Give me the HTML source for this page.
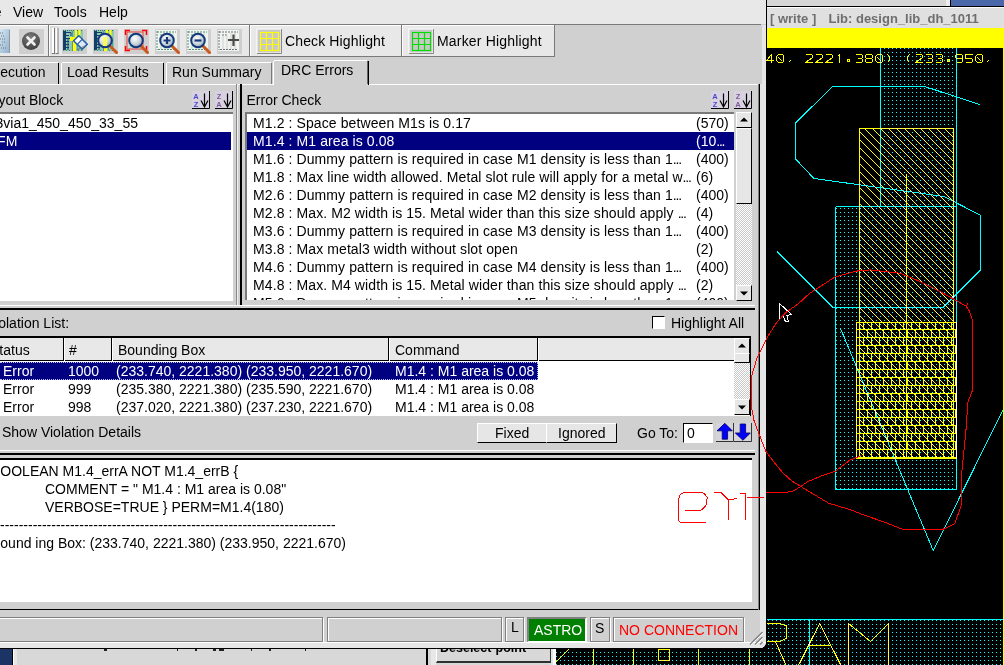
<!DOCTYPE html>
<html><head><meta charset="utf-8">
<style>
*{box-sizing:border-box}
html,body{margin:0;padding:0}
body{width:1004px;height:665px;position:relative;overflow:hidden;background:#000;font-family:"Liberation Sans",sans-serif;font-size:14px;color:#000}
.a{position:absolute}
.t{position:absolute;white-space:pre;line-height:18px}
.btn{position:absolute;background:#e6e6e6;border:1px solid;border-color:#fff #000 #000 #fff}
.sunk{position:absolute;border:1px solid #808080;box-shadow:inset 1px 1px #fff,1px 1px #fff}
</style></head><body>

<svg class="a" style="left:0;top:0;z-index:0" width="1004" height="665" viewBox="0 0 1004 665" shape-rendering="crispEdges">
<defs>
<pattern id="dots" patternUnits="userSpaceOnUse" x="0" y="0" width="4" height="4"><rect x="0" y="0" width="1" height="1" fill="#00ffff"/></pattern>
<pattern id="hatch" patternUnits="userSpaceOnUse" x="0" y="0" width="8" height="8"><path d="M-3,-3 L11,11 M-11,-3 L3,11 M5,-3 L19,11" stroke="#ffff00" stroke-width="1" fill="none" /></pattern>
<pattern id="brick" patternUnits="userSpaceOnUse" x="0" y="1" width="8" height="16"><path d="M0,0.5 H8 M0,8.5 H8 M7.5,0 V8 M3.5,8 V16" stroke="#ffff00" stroke-width="1" fill="none"/></pattern>
</defs>
<rect x="0" y="0" width="1004" height="665" fill="#000"/>
<g id="cyan" fill="none" stroke="#00ffff" stroke-width="1">
  <rect x="880" y="48" width="76" height="158" fill="url(#dots)" stroke="none"/>
  <rect x="835" y="206" width="121" height="283" fill="url(#dots)" stroke="none"/>
  <rect x="555" y="619" width="449" height="46" fill="url(#dots)" stroke="none"/>
  <path d="M880.5,48 V206.5 M956.5,48 V489.5 M835.5,206.5 H956.5 M835.5,206.5 V489.5 H956.5"/>
  <path d="M767,619.5 H1004 M809.5,619.5 V665"/>
  <polyline  points="924.8,86.5 979.7,104.5"/>
  <polyline  points="924.8,86.5 832.5,86.5 795.5,123 795.5,159 814,178.5 944,196.5 980,215 980,270.6 943,307.5 833,307.5 777,251.5"/>
  <polyline  points="840.3,328 933.2,550.6 1003,410"/>
</g>
<g id="yellow" fill="none" stroke="#ffff00" stroke-width="1" style="mix-blend-mode:lighten">
  <rect x="859" y="128" width="95" height="331" fill="url(#hatch)" stroke="none"/>
  <rect x="859.5" y="128.5" width="94" height="330"/>
  <path d="M906.5,174 V459"/>
  <rect x="856" y="322" width="101" height="137" fill="url(#brick)" stroke="none"/>
  <rect x="856.5" y="322.5" width="100" height="136"/>
  <path d="M953.5,322 V459"/>
  <path d="M1003.5,48 V665"/>
  <g >
  <polyline points="767,623.5 780,623.5 786.7,626 786.7,638 780,641.4 767,641.4"/>
  <polyline points="775.3,641.4 786,665"/>
  <polyline points="798.7,665 819.7,623.4 840.8,665"/>
  <polyline points="809.4,645.5 830.8,645.5"/>
  <polyline points="848.5,665 848.5,623.4 870.4,641.4 888.6,623.4 888.6,665"/>
  <polyline points="556,662 569,649"/>
  </g>
  <path d="M593.5,648 V665 M633.5,648 V665 M698.5,648 V665 M749.5,648 V665"/>
  <rect x="658.5" y="649.5" width="11" height="10.5"/>
</g>
<path d="M771.5,62.5 V54.5 L766.5,60.5 H773.5 M778.5,54.5 H782.5 L783.5,55.5 V61.5 L782.5,62.5 H778.5 L776.5,60.5 V56.5 ZM778.5,57.5 L782.5,61.5 M790.5,59.5 V60.5 L788.5,62.5 M805.5,55.5 L806.5,54.5 H811.5 L812.5,55.5 V57.5 L805.5,62.5 H812.5 M815.5,55.5 L816.5,54.5 H821.5 L822.5,55.5 V57.5 L815.5,62.5 H822.5 M825.5,55.5 L826.5,54.5 H831.5 L832.5,55.5 V57.5 L825.5,62.5 H832.5 M837.5,56.5 L839.5,54.5 V62.5 M847.5,59.5 H849.5 V61.5 H847.5 ZM855.5,54.5 H861.5 L862.5,55.5 V57.5 L861.5,58.5 H857.5 M861.5,58.5 L862.5,59.5 V61.5 L861.5,62.5 H855.5 M866.5,54.5 H871.5 L872.5,55.5 V57.5 L871.5,58.5 H866.5 L865.5,57.5 V55.5 ZM866.5,58.5 L865.5,59.5 V61.5 L866.5,62.5 H871.5 L872.5,61.5 V59.5 L871.5,58.5 M877.5,54.5 H881.5 L882.5,55.5 V61.5 L881.5,62.5 H877.5 L875.5,60.5 V56.5 ZM877.5,57.5 L881.5,61.5 M887.5,54.5 L889.5,56.5 V60.5 L887.5,62.5 M909.5,54.5 L907.5,56.5 V60.5 L909.5,62.5 M915.5,55.5 L916.5,54.5 H921.5 L922.5,55.5 V57.5 L915.5,62.5 H922.5 M925.5,54.5 H931.5 L932.5,55.5 V57.5 L931.5,58.5 H927.5 M931.5,58.5 L932.5,59.5 V61.5 L931.5,62.5 H925.5 M935.5,54.5 H941.5 L942.5,55.5 V57.5 L941.5,58.5 H937.5 M941.5,58.5 L942.5,59.5 V61.5 L941.5,62.5 H935.5 M947.5,59.5 H949.5 V61.5 H947.5 ZM961.5,58.5 H956.5 L955.5,57.5 V55.5 L956.5,54.5 H961.5 L962.5,55.5 V61.5 L961.5,62.5 H956.5 M972.5,54.5 H965.5 V58.5 H971.5 L972.5,59.5 V61.5 L971.5,62.5 H965.5 M977.5,54.5 H981.5 L982.5,55.5 V61.5 L981.5,62.5 H977.5 L975.5,60.5 V56.5 ZM977.5,57.5 L981.5,61.5 M988.5,59.5 V60.5 L986.5,62.5 " stroke="#ffff00" stroke-width="1" fill="none" shape-rendering="crispEdges" style="mix-blend-mode:lighten"/>
</svg>

<div class="a" style="left:766px;top:0;width:238px;height:48px;overflow:hidden;will-change:transform">
  <div class="a" style="left:1px;top:0;width:184px;height:6px;background:#d6d6d6"></div>
  <div class="a" style="left:180px;top:0;width:4px;height:6px;background:#ececec"></div>
  <div class="a" style="left:184px;top:0;width:1px;height:6px;background:#000"></div>
  <div class="a" style="left:185px;top:0;width:53px;height:6px;background:#4a67aa"></div>
  <div class="a" style="left:1px;top:6px;width:237px;height:1px;background:#000"></div>
  <div class="a" style="left:1px;top:7px;width:237px;height:1px;background:#fff"></div>
  <div class="a" style="left:1px;top:8px;width:237px;height:20px;background:#e0e0e0"></div>
  <div class="t" style="left:4px;top:9px;font-size:13px;font-weight:bold;color:#6e6e6e;line-height:20px">[ write ]</div>
  <div class="t" style="left:62.5px;top:9px;font-size:13px;font-weight:bold;color:#6e6e6e;line-height:20px">Lib: design_lib_dh_1011</div>
  <div class="a" style="left:1px;top:28px;width:237px;height:20px;background:#ffff00"></div>
</div>

<div class="a" style="left:0;top:648px;width:556px;height:17px;background:#d8d8d8;overflow:hidden;will-change:transform">
  <div class="a" style="left:0;top:0;width:12px;height:17px;background:#1c3366"></div>
  <div class="a" style="left:12px;top:0;width:1px;height:17px;background:#000"></div>
  <div class="a" style="left:13px;top:0;width:1px;height:17px;background:#fff"></div>
  <div class="a" style="left:14px;top:0;width:3px;height:17px;background:#e6e6e6"></div>
  <div class="a" style="left:426px;top:0;width:2px;height:17px;background:#000"></div>
  <div class="a" style="left:431px;top:0;width:5px;height:17px;background:#e8e8e8"></div>
  <div class="a" style="left:436px;top:0;width:115px;height:15px;background:#d8d8d8;border:1px solid;border-color:#fff #303030 #303030 #fff;border-top:none;border-bottom-width:2px"></div>
  <div class="t" style="left:440px;top:-9.5px;font-size:12.5px;font-weight:bold">Deselect-point</div>
  <div class="a" style="left:551px;top:0;width:5px;height:17px;background:#e4e4e4;border-right:3px solid #fff"></div>
  <div class="a" style="left:0;top:0;width:556px;height:1px;background:#000"></div>
  <div class="a" style="left:104px;top:1px;width:3px;height:2px;background:#222"></div><div class="a" style="left:177px;top:1px;width:1px;height:2px;background:#222"></div><div class="a" style="left:195px;top:1px;width:1.5px;height:2px;background:#222"></div><div class="a" style="left:213px;top:1px;width:3px;height:2px;background:#222"></div><div class="a" style="left:219px;top:1px;width:5px;height:2px;background:#222"></div><div class="a" style="left:251px;top:1px;width:1px;height:2px;background:#222"></div><div class="a" style="left:269px;top:1px;width:1.5px;height:2px;background:#222"></div><div class="a" style="left:305px;top:1px;width:1px;height:2px;background:#222"></div>
</div>

<div class="a" style="left:556px;top:648px;width:210px;height:1px;background:#000"></div>
<div id="main" class="a" style="will-change:transform;left:0;top:0;width:766px;height:648px;background:#d0d0d0;overflow:hidden;border-bottom-right-radius:6px">
<div class="a" style="left:0;top:0;width:766px;height:24px;background:#e8e8e8"></div>
<div class="t" style="left:-21px;top:3px">File</div>
<div class="t" style="left:13px;top:3px">View</div>
<div class="t" style="left:54px;top:3px">Tools</div>
<div class="t" style="left:99px;top:3px">Help</div>
<div class="a" style="left:0;top:24px;width:761px;height:1px;background:#7a7a7a"></div>
<div class="a" style="left:0;top:25px;width:554px;height:31px;background:#e8e8e8;border-top:1px solid #fff"></div>
<div class="a" style="left:554px;top:25px;width:1px;height:32px;background:#7a7a7a"></div>
<div class="a" style="left:0;top:56px;width:555px;height:1px;background:#7a7a7a"></div>
<div class="a" style="left:48px;top:25px;width:1px;height:31px;background:#7a7a7a"></div>
<div class="a" style="left:49px;top:25px;width:1px;height:31px;background:#fff"></div>
<div class="a" style="left:249px;top:25px;width:1px;height:31px;background:#7a7a7a"></div>
<div class="a" style="left:250px;top:25px;width:1px;height:31px;background:#fff"></div>
<div class="a" style="left:401px;top:25px;width:1px;height:31px;background:#7a7a7a"></div>
<div class="a" style="left:402px;top:25px;width:1px;height:31px;background:#fff"></div>
<svg class="a" style="left:0;top:0" width="260" height="60" viewBox="0 0 260 60">
<defs>
<radialGradient id="glass" cx="0.4" cy="0.35" r="0.7"><stop offset="0" stop-color="#ffffff"/><stop offset="0.6" stop-color="#c8d4dc"/><stop offset="1" stop-color="#8da0ae"/></radialGradient>
<radialGradient id="xball" cx="0.45" cy="0.3" r="0.75"><stop offset="0" stop-color="#7a7a7a"/><stop offset="1" stop-color="#3c3c3c"/></radialGradient>
<linearGradient id="doc" x1="0" y1="0" x2="1" y2="1"><stop offset="0" stop-color="#d6e6f2"/><stop offset="1" stop-color="#8fb0cc"/></linearGradient>
</defs>
<rect x="0" y="29" width="10" height="24" fill="url(#doc)"/><rect x="9" y="30" width="1" height="23" fill="#8a98a4"/><path d="M0,33 H3 M1,36 H5 M0,39 H6 M2,42 H5 M0,45 H4 M1,48 H6" stroke="#6a7a88" stroke-width="1" stroke-dasharray="1,1"/><rect x="19" y="29" width="25" height="25" fill="#cfcfcf"/><circle cx="31" cy="41" r="9" fill="url(#xball)"/><path d="M27.5,37.5 L34.5,44.5 M34.5,37.5 L27.5,44.5" stroke="#f0f0f0" stroke-width="2.6" stroke-linecap="round"/><rect x="50" y="26" width="9" height="29" fill="#dcdcdc"/><rect x="52" y="28" width="3" height="26" fill="#fff"/><rect x="54" y="28" width="1" height="26" fill="#777"/><rect x="52" y="53" width="3" height="1" fill="#777"/><rect x="55.5" y="28" width="3" height="26" fill="#fff"/><rect x="57.5" y="28" width="1" height="26" fill="#777"/><rect x="55.5" y="53" width="3" height="1" fill="#777"/><rect x="62" y="29" width="25" height="25" fill="#cfcfcf"/><rect x="63" y="30" width="20" height="21" fill="#8fc6b2"/><path d="M63,30.5 H83" stroke="#2f6f70" stroke-width="1" stroke-dasharray="1,1"/><path d="M63,50.5 H83" stroke="#4f8f80" stroke-width="1" stroke-dasharray="1,2"/><rect x="63" y="31" width="3" height="19" fill="#123f6a"/><path d="M66,32.5 H71 V36 M66,35.5 H69 M66,38.5 H70 M66,41.5 H69 M66,44.5 H69 M66,47.5 H69 M68,39 V50" stroke="#123f6a" stroke-width="1" fill="none"/><path d="M72.5,31 V50 M77.5,38 V50 M81.5,40 V50" stroke="#5a9a90" stroke-width="1" fill="none"/><rect x="75" y="30" width="2" height="7" fill="#ffff00"/><rect x="78.5" y="30" width="2" height="8" fill="#ffff00"/><rect x="70" y="37" width="6" height="4" fill="#ffff00"/><rect x="73" y="37" width="3" height="14" fill="#ffff00"/><g transform="translate(80.5,42.5) rotate(45)"><rect x="-6" y="-3.5" width="12" height="7" fill="#dfe8f8" stroke="#1d5fa8" stroke-width="1.5"/><rect x="-6" y="-3.5" width="5" height="7" fill="#ffffff" stroke="#1d5fa8" stroke-width="1.2"/></g><path d="M77,50 L85,46" stroke="#606060" stroke-width="1.5" opacity="0.5"/><rect x="93" y="29" width="25" height="25" fill="#cfcfcf"/><rect x="94" y="30" width="20" height="21" fill="#8fc6b2"/><path d="M94,30.5 H114" stroke="#2f6f70" stroke-width="1" stroke-dasharray="1,1"/><path d="M94,50.5 H114" stroke="#4f8f80" stroke-width="1" stroke-dasharray="1,2"/><rect x="94" y="31" width="3" height="19" fill="#123f6a"/><path d="M97,32.5 H102 V36 M97,35.5 H100 M97,38.5 H101 M97,41.5 H100 M97,44.5 H100 M97,47.5 H100 M99,39 V50" stroke="#123f6a" stroke-width="1" fill="none"/><path d="M103.5,31 V50 M108.5,38 V50 M112.5,40 V50" stroke="#5a9a90" stroke-width="1" fill="none"/><rect x="106" y="30" width="2" height="7" fill="#ffff00"/><rect x="109.5" y="30" width="2" height="8" fill="#ffff00"/><rect x="101" y="37" width="6" height="4" fill="#ffff00"/><rect x="104" y="37" width="3" height="14" fill="#ffff00"/><line x1="110" y1="46" x2="116.5" y2="52.5" stroke="#c85a1e" stroke-width="3" stroke-linecap="round"/>
<circle cx="105" cy="40.5" r="6.8" fill="url(#glass)" stroke="#14387a" stroke-width="2"/><rect x="103" y="37" width="4" height="9" fill="#ffff40" opacity="0.9"/><rect x="124" y="29" width="25" height="25" fill="#cfcfcf"/><rect x="127" y="32" width="16" height="17" fill="#c8dcd4" stroke="#f04040" stroke-width="1"/><path d="M125.5,35 V30.5 H130 M142,30.5 H146.5 V35 M125.5,46 V50.5 H130 M146.5,46 V50.5" stroke="#f00" stroke-width="1.5" fill="none"/><line x1="141" y1="46" x2="147.5" y2="52.5" stroke="#c85a1e" stroke-width="3" stroke-linecap="round"/>
<circle cx="136" cy="40.5" r="6.8" fill="url(#glass)" stroke="#14387a" stroke-width="2"/><rect x="155" y="29" width="25" height="25" fill="#cfcfcf"/><rect x="156" y="30" width="21" height="21" fill="#eef4f0"/><path d="M157,31 V50 M157,32 H176 M160,35 H165 M158,49.5 H176" stroke="#5a8a70" stroke-width="1" fill="none" stroke-dasharray="2,1"/><path d="M161,36 V49 M165,36 V49 M169,33 V49 M173,33 V49" stroke="#b8d8c8" stroke-width="1" fill="none"/><line x1="172" y1="46" x2="178.5" y2="52.5" stroke="#c85a1e" stroke-width="3" stroke-linecap="round"/>
<circle cx="167" cy="40.5" r="6.8" fill="url(#glass)" stroke="#14387a" stroke-width="2"/><path d="M163.5,40.5 H170.5 M167,37 V44" stroke="#14387a" stroke-width="2.2"/><rect x="186" y="29" width="25" height="25" fill="#cfcfcf"/><rect x="187" y="30" width="21" height="21" fill="#eef4f0"/><path d="M188,31 V50 M188,32 H207 M191,35 H196 M189,49.5 H207" stroke="#5a8a70" stroke-width="1" fill="none" stroke-dasharray="2,1"/><path d="M192,36 V49 M196,36 V49 M200,33 V49 M204,33 V49" stroke="#b8d8c8" stroke-width="1" fill="none"/><line x1="203" y1="46" x2="209.5" y2="52.5" stroke="#c85a1e" stroke-width="3" stroke-linecap="round"/>
<circle cx="198" cy="40.5" r="6.8" fill="url(#glass)" stroke="#14387a" stroke-width="2"/><path d="M194.5,40.5 H201.5" stroke="#14387a" stroke-width="2.2"/><rect x="217" y="29" width="25" height="25" fill="#cfcfcf"/><rect x="218" y="30" width="21" height="21" fill="#eef4f0"/><path d="M219,31 V50 M219,32 H238 M222,35 H227 M220,49.5 H238" stroke="#707070" stroke-width="1" fill="none" stroke-dasharray="2,1"/><path d="M223,36 V49 M227,36 V49 M231,33 V49 M235,33 V49" stroke="#d0d0d0" stroke-width="1" fill="none"/><path d="M228,40 H239 M233.5,34.5 V46" stroke="#4a4a4a" stroke-width="2.2"/></svg>
<svg class="a" style="left:255px;top:27px" width="185" height="30" viewBox="255 27 185 30">
<rect x="257" y="29" width="24" height="24" fill="#c8c8c8" stroke="#fff" stroke-width="1"/>
<path d="M281.5,29 V53.5 H257" stroke="#888" stroke-width="1" fill="none"/>
<rect x="260.5" y="32.5" width="18" height="18" fill="none" stroke="#ffff00" stroke-width="1.2"/>
<path d="M266.5,32.5 V50.5 M272.5,32.5 V50.5 M260.5,38.5 H278.5 M260.5,44.5 H278.5" stroke="#ffff00" stroke-width="1.2"/>
<rect x="409" y="29" width="24" height="24" fill="#c8c8c8" stroke="#fff" stroke-width="1"/>
<path d="M433.5,29 V53.5 H409" stroke="#888" stroke-width="1" fill="none"/>
<rect x="412.5" y="32.5" width="18" height="18" fill="none" stroke="#00e000" stroke-width="1.2"/>
<path d="M418.5,32.5 V50.5 M424.5,32.5 V50.5 M412.5,38.5 H430.5 M412.5,44.5 H430.5" stroke="#00e000" stroke-width="1.2"/>
</svg>

<div class="t" style="left:285px;top:32px;letter-spacing:0.13px">Check Highlight</div>
<div class="t" style="left:437px;top:32px;letter-spacing:0.18px">Marker Highlight</div>
<div class="a" style="left:0;top:84px;width:759px;height:1px;background:#fff"></div>
<div class="a" style="left:0;top:62px;width:58px;height:1px;background:#fff"></div>
<div class="a" style="left:58px;top:63px;width:1px;height:21px;background:#000"></div>
<div class="t" style="left:-16px;top:63px">Execution</div>
<div class="a" style="left:62px;top:62px;width:101px;height:1px;background:#fff"></div>
<div class="a" style="left:61px;top:63px;width:1px;height:21px;background:#fff"></div>
<div class="a" style="left:163px;top:63px;width:1px;height:21px;background:#000"></div>
<div class="t" style="left:67px;top:63px">Load Results</div>
<div class="a" style="left:167px;top:62px;width:104px;height:1px;background:#fff"></div>
<div class="a" style="left:166px;top:63px;width:1px;height:21px;background:#fff"></div>
<div class="a" style="left:271px;top:63px;width:1px;height:21px;background:#7a7a7a"></div>
<div class="t" style="left:172px;top:63px">Run Summary</div>
<div class="a" style="left:274px;top:60px;width:93px;height:1px;background:#fff"></div>
<div class="a" style="left:273px;top:61px;width:1px;height:24px;background:#fff"></div>
<div class="a" style="left:274px;top:84px;width:94px;height:1px;background:#d0d0d0"></div>
<div class="a" style="left:368px;top:61px;width:1px;height:24px;background:#000"></div>
<div class="a" style="left:367px;top:61px;width:1px;height:23px;background:#666"></div>
<div class="t" style="left:281px;top:61px">DRC Errors</div>
<div class="t" style="left:-17px;top:91px">Layout Block</div>
<div class="t" style="left:246.5px;top:91px">Error Check</div>
<svg class="a" style="left:0;top:0" width="766" height="120" viewBox="0 0 766 120"><rect x="192" y="91" width="18" height="18" fill="#d8d2e0"/><path d="M209.5,91 V108.5 H192" stroke="#000" stroke-width="1" fill="none"/><text x="196" y="99" font-family="Liberation Sans" font-size="7.5" font-weight="bold" fill="#4848c8" text-anchor="middle">A</text><text x="196" y="107" font-family="Liberation Sans" font-size="7.5" font-weight="bold" fill="#4848c8" text-anchor="middle">Z</text><path d="M204.5,93.5 V107 M201.0,100.5 L204.5,107 L208.0,100.5" stroke="#000" stroke-width="1.2" fill="none"/><rect x="215" y="91" width="18" height="18" fill="#d8d2e0"/><path d="M232.5,91 V108.5 H215" stroke="#000" stroke-width="1" fill="none"/><text x="219" y="99" font-family="Liberation Sans" font-size="7.5" font-weight="bold" fill="#7a5a9a" text-anchor="middle">Z</text><text x="219" y="107" font-family="Liberation Sans" font-size="7.5" font-weight="bold" fill="#7a5a9a" text-anchor="middle">A</text><path d="M227.5,93.5 V107 M224.0,100.5 L227.5,107 L231.0,100.5" stroke="#000" stroke-width="1.2" fill="none"/><rect x="711" y="91" width="18" height="18" fill="#d8d2e0"/><path d="M728.5,91 V108.5 H711" stroke="#000" stroke-width="1" fill="none"/><text x="715" y="99" font-family="Liberation Sans" font-size="7.5" font-weight="bold" fill="#4848c8" text-anchor="middle">A</text><text x="715" y="107" font-family="Liberation Sans" font-size="7.5" font-weight="bold" fill="#4848c8" text-anchor="middle">Z</text><path d="M723.5,93.5 V107 M720.0,100.5 L723.5,107 L727.0,100.5" stroke="#000" stroke-width="1.2" fill="none"/><rect x="734" y="91" width="18" height="18" fill="#d8d2e0"/><path d="M751.5,91 V108.5 H734" stroke="#000" stroke-width="1" fill="none"/><text x="738" y="99" font-family="Liberation Sans" font-size="7.5" font-weight="bold" fill="#7a5a9a" text-anchor="middle">Z</text><text x="738" y="107" font-family="Liberation Sans" font-size="7.5" font-weight="bold" fill="#7a5a9a" text-anchor="middle">A</text><path d="M746.5,93.5 V107 M743.0,100.5 L746.5,107 L750.0,100.5" stroke="#000" stroke-width="1.2" fill="none"/></svg>
<div class="a" style="left:0;top:112px;width:233px;height:189px;background:#fff;border-top:2px solid #7a7a7a"></div>
<div class="a" style="left:0;top:132px;width:231px;height:18px;background:#000080"></div>
<div class="t" style="left:-4.5px;top:114px">3via1_450_450_33_55</div>
<div class="t" style="left:-13px;top:132px;color:#fff">DFM</div>
<div class="a" style="left:236px;top:84px;width:1px;height:221px;background:#888"></div>
<div class="a" style="left:237px;top:84px;width:1px;height:221px;background:#eee"></div>
<div class="a" style="left:240px;top:84px;width:2px;height:221px;background:#000"></div>
<div class="a" style="left:245px;top:112px;width:489px;height:188px;background:#fff;border-top:2px solid #7a7a7a;border-left:2px solid #7a7a7a;overflow:hidden">
<div class="a" style="left:0;top:18px;width:487px;height:18px;background:#000080"></div>
<div class="t" style="left:6px;top:0px;color:#000;letter-spacing:0.1px">M1.2 : Space between M1s is 0.17</div>
<div class="t" style="left:449px;top:0px;color:#000">(570)</div>
<div class="t" style="left:6px;top:18px;color:#fff;letter-spacing:0.1px">M1.4 : M1 area is 0.08</div>
<div class="t" style="left:449px;top:18px;color:#fff">(10<span style='letter-spacing:-1.2px'>...</span></div>
<div class="t" style="left:6px;top:36px;color:#000;letter-spacing:0.1px">M1.6 : Dummy pattern is required in case M1 density is less than 1<span style="letter-spacing:-1.2px">...</span></div>
<div class="t" style="left:449px;top:36px;color:#000">(400)</div>
<div class="t" style="left:6px;top:54px;color:#000;letter-spacing:0.1px">M1.8 : Max line width allowed. Metal slot rule will apply for a metal w<span style="letter-spacing:-1.2px">...</span></div>
<div class="t" style="left:449px;top:54px;color:#000">(6)</div>
<div class="t" style="left:6px;top:72px;color:#000;letter-spacing:0.1px">M2.6 : Dummy pattern is required in case M2 density is less than 1<span style="letter-spacing:-1.2px">...</span></div>
<div class="t" style="left:449px;top:72px;color:#000">(400)</div>
<div class="t" style="left:6px;top:90px;color:#000;letter-spacing:0.1px">M2.8 : Max. M2 width is 15. Metal wider than this size should apply <span style="letter-spacing:-1.2px">...</span></div>
<div class="t" style="left:449px;top:90px;color:#000">(4)</div>
<div class="t" style="left:6px;top:108px;color:#000;letter-spacing:0.1px">M3.6 : Dummy pattern is required in case M3 density is less than 1<span style="letter-spacing:-1.2px">...</span></div>
<div class="t" style="left:449px;top:108px;color:#000">(400)</div>
<div class="t" style="left:6px;top:126px;color:#000;letter-spacing:0.1px">M3.8 : Max metal3 width without slot open</div>
<div class="t" style="left:449px;top:126px;color:#000">(2)</div>
<div class="t" style="left:6px;top:144px;color:#000;letter-spacing:0.1px">M4.6 : Dummy pattern is required in case M4 density is less than 1<span style="letter-spacing:-1.2px">...</span></div>
<div class="t" style="left:449px;top:144px;color:#000">(400)</div>
<div class="t" style="left:6px;top:162px;color:#000;letter-spacing:0.1px">M4.8 : Max. M4 width is 15. Metal wider than this size should apply <span style="letter-spacing:-1.2px">...</span></div>
<div class="t" style="left:449px;top:162px;color:#000">(2)</div>
<div class="t" style="left:6px;top:180px;color:#000;letter-spacing:0.1px">M5.6 : Dummy pattern is required in case M5 density is less than 1<span style="letter-spacing:-1.2px">...</span></div>
<div class="t" style="left:449px;top:180px;color:#000">(400)</div>
</div>
<div class="a" style="left:736px;top:112px;width:16px;height:189px;background-color:#fff;background-image:linear-gradient(45deg,#c8c8c8 25%,transparent 25%,transparent 75%,#c8c8c8 75%),linear-gradient(45deg,#c8c8c8 25%,transparent 25%,transparent 75%,#c8c8c8 75%);background-size:2px 2px;background-position:0 0,1px 1px"></div><div class="a" style="left:736px;top:112px;width:16px;height:16px;background:#e6e6e6;border-style:solid;border-width:1px 1px 1px 1px;border-color:#fff #000 #000 #fff"></div><svg class="a" style="left:739.5px;top:117px" width="8" height="5"><path d="M0,4.5 L4,0.5 L8,4.5 Z" fill="#000"/></svg><div class="a" style="left:736px;top:128px;width:16px;height:76px;background:#e6e6e6;border-style:solid;border-width:1px 1px 1px 1px;border-color:#fff #000 #000 #fff"></div><div class="a" style="left:736px;top:285px;width:16px;height:16px;background:#e6e6e6;border-style:solid;border-width:1px 1px 1px 1px;border-color:#fff #000 #000 #fff"></div><svg class="a" style="left:739.5px;top:291px" width="8" height="5"><path d="M0,0.5 L4,4.5 L8,0.5 Z" fill="#000"/></svg>
<div class="a" style="left:0;top:305px;width:755px;height:1px;background:#fff"></div>
<div class="a" style="left:0;top:308px;width:755px;height:2px;background:#000"></div>
<div class="t" style="left:-14px;top:314px">Violation List:</div>
<div class="a" style="left:652px;top:316px;width:13px;height:13px;background:#fff;border:1px solid;border-color:#000 #fff #fff #000"></div>
<div class="t" style="left:671px;top:314px">Highlight All</div>
<div class="a" style="left:0;top:336px;width:750px;height:80px;background:#fff;border-top:2px solid #000;overflow:hidden">
<div class="a" style="left:0;top:0;width:734px;height:23px;background:#e8e8e8;border-bottom:1px solid #000"></div>
<div class="a" style="left:63px;top:0;width:1px;height:23px;background:#000"></div>
<div class="a" style="left:64px;top:0;width:1px;height:23px;background:#fff"></div>
<div class="a" style="left:111px;top:0;width:1px;height:23px;background:#000"></div>
<div class="a" style="left:112px;top:0;width:1px;height:23px;background:#fff"></div>
<div class="a" style="left:388px;top:0;width:1px;height:23px;background:#000"></div>
<div class="a" style="left:389px;top:0;width:1px;height:23px;background:#fff"></div>
<div class="a" style="left:537px;top:0;width:1px;height:23px;background:#000"></div>
<div class="a" style="left:538px;top:0;width:1px;height:23px;background:#fff"></div>
<div class="t" style="left:-10px;top:3px">Status</div>
<div class="t" style="left:69px;top:3px">#</div>
<div class="t" style="left:118px;top:3px">Bounding Box</div>
<div class="t" style="left:395px;top:3px">Command</div>
<div class="a" style="left:0;top:24px;width:538px;height:18px;background:#000080;border:1px dotted #c0c0ff;border-left:none"></div>
<div class="t" style="left:3px;top:24px;color:#fff">Error</div>
<div class="t" style="left:68px;top:24px;color:#fff">1000</div>
<div class="t" style="left:116px;top:24px;color:#fff">(233.740, 2221.380) (233.950, 2221.670)</div>
<div class="t" style="left:395px;top:24px;color:#fff">M1.4 : M1 area is 0.08</div>
<div class="t" style="left:3px;top:42px;color:#000">Error</div>
<div class="t" style="left:68px;top:42px;color:#000">999</div>
<div class="t" style="left:116px;top:42px;color:#000">(235.380, 2221.380) (235.590, 2221.670)</div>
<div class="t" style="left:395px;top:42px;color:#000">M1.4 : M1 area is 0.08</div>
<div class="t" style="left:3px;top:60px;color:#000">Error</div>
<div class="t" style="left:68px;top:60px;color:#000">998</div>
<div class="t" style="left:116px;top:60px;color:#000">(237.020, 2221.380) (237.230, 2221.670)</div>
<div class="t" style="left:395px;top:60px;color:#000">M1.4 : M1 area is 0.08</div>
</div>
<div class="a" style="left:734px;top:338px;width:16px;height:77px;background-color:#fff;background-image:linear-gradient(45deg,#c8c8c8 25%,transparent 25%,transparent 75%,#c8c8c8 75%),linear-gradient(45deg,#c8c8c8 25%,transparent 25%,transparent 75%,#c8c8c8 75%);background-size:2px 2px;background-position:0 0,1px 1px"></div><div class="a" style="left:734px;top:338px;width:16px;height:16px;background:#e6e6e6;border-style:solid;border-width:1px 1px 1px 1px;border-color:#fff #000 #000 #fff"></div><svg class="a" style="left:737.5px;top:343px" width="8" height="5"><path d="M0,4.5 L4,0.5 L8,4.5 Z" fill="#000"/></svg><div class="a" style="left:734px;top:353px;width:16px;height:10px;background:#e6e6e6;border-style:solid;border-width:1px 1px 1px 1px;border-color:#fff #000 #000 #fff"></div><div class="a" style="left:734px;top:399px;width:16px;height:16px;background:#e6e6e6;border-style:solid;border-width:1px 1px 1px 1px;border-color:#fff #000 #000 #fff"></div><svg class="a" style="left:737.5px;top:405px" width="8" height="5"><path d="M0,0.5 L4,4.5 L8,0.5 Z" fill="#000"/></svg>
<div class="a" style="left:750px;top:336px;width:1px;height:80px;background:#000"></div>
<div class="t" style="left:2px;top:423px">Show Violation Details</div>
<div class="btn" style="left:477px;top:423px;width:70px;height:20px"></div>
<div class="t" style="left:495px;top:424px">Fixed</div>
<div class="btn" style="left:546px;top:423px;width:71px;height:20px"></div>
<div class="t" style="left:558px;top:424px">Ignored</div>
<div class="t" style="left:637px;top:424px">Go To:</div>
<div class="a" style="left:683px;top:423px;width:30px;height:20px;background:#fff;border:1px solid;border-color:#000 #fff #fff #000"></div>
<div class="t" style="left:687px;top:424px">0</div>
<svg class="a" style="left:714px;top:421px" width="42" height="24" viewBox="714 421 42 24">
<rect x="716" y="423" width="36" height="19" fill="#d6d4d8"/>
<path d="M733.5,423 V441.5 H716 M751.5,423 V441.5 H734" stroke="#333" stroke-width="1" fill="none"/>
<path d="M717,430.8 L724.8,423.3 L732.3,430.8 L727.6,430.8 L727.6,439.2 L722.2,439.2 L722.2,430.8 Z" fill="#0000ff" stroke="#000060" stroke-width="0.8"/>
<path d="M740.2,424 L745.6,424 L745.6,433 L750.3,433 L743,440.3 L735.3,433 L740.2,433 Z" fill="#0000ff" stroke="#000060" stroke-width="0.8"/>
</svg>

<div class="a" style="left:0;top:450px;width:755px;height:1px;background:#fff"></div>
<div class="a" style="left:0;top:453px;width:755px;height:2px;background:#000"></div>
<div class="a" style="left:0;top:458px;width:752px;height:144px;background:#fff;border-top:2px solid #000"></div>
<div class="a" style="left:0;top:602px;width:759px;height:7px;background:#d0d0d0"></div>
<div class="a" style="left:0;top:609px;width:760px;height:1px;background:#000"></div>
<div class="a" style="left:759px;top:84px;width:1px;height:526px;background:#000"></div>
<div class="t" style="left:-9px;top:462px">BOOLEAN M1.4_errA NOT M1.4_errB {</div>
<div class="t" style="left:45px;top:480px">COMMENT = " M1.4 : M1 area is 0.08"</div>
<div class="t" style="left:45px;top:498px">VERBOSE=TRUE } PERM=M1.4(180)</div>
<div class="t" style="left:0px;top:516px">------------------------------------------------------------------------</div>
<div class="t" style="left:-9px;top:534px">Bound ing Box: (233.740, 2221.380) (233.950, 2221.670)</div>
<div class="sunk" style="left:-2px;top:617px;width:325px;height:25px"></div>
<div class="sunk" style="left:327px;top:617px;width:175px;height:25px"></div>
<div class="sunk" style="left:505px;top:617px;width:19px;height:25px"></div>
<div class="t" style="left:511px;top:618px">L</div>
<div class="a" style="left:527px;top:617px;width:60px;height:25px;background:#008000;border:2px solid;border-color:#808080 #fff #fff #808080;border-bottom-width:1px"></div>
<div class="t" style="left:534px;top:621px;color:#fff">ASTRO</div>
<div class="sunk" style="left:590px;top:617px;width:20px;height:25px"></div>
<div class="t" style="left:595px;top:619px">S</div>
<div class="sunk" style="left:613px;top:617px;width:131px;height:25px"></div>
<div class="t" style="left:619px;top:621px;color:#f00">NO CONNECTION</div>
<div class="a" style="left:762px;top:25px;width:4px;height:623px;background:#e6e6e6"></div>
<div class="a" style="left:760px;top:84px;width:2px;height:564px;background:#e6e6e6"></div>
<div class="a" style="left:758px;top:84px;width:1px;height:526px;background:#808080"></div>
<div class="a" style="left:0;top:642px;width:766px;height:1px;background:#fff"></div>
<div class="a" style="left:0;top:643px;width:766px;height:5px;background:#e6e6e6"></div>
<svg class="a" style="left:746px;top:628px" width="20" height="20" viewBox="746 628 20 20">
<path d="M750,644.5 L762.5,632 M755,644.5 L762.5,637 M760,644.5 L762.5,642" stroke="#808080" stroke-width="1.4" fill="none"/>
<path d="M751,645 L763,633 M756,645 L763,638" stroke="#fff" stroke-width="0.8" fill="none"/>
</svg>

</div>
<svg class="a" style="left:0;top:0;z-index:10" width="1004" height="665" viewBox="0 0 1004 665" shape-rendering="crispEdges">
<path d="M779.5,303.5 L779.5,319.5 L783,316 L785.5,321.5 L788.5,321.5 L787,315.5 L791.5,314.5 Z" fill="#000" stroke="#fff" stroke-width="1"/>
<g fill="none" stroke="#ff0000" stroke-width="1">
<polyline points="967.8,303.1 966.2,306.3 955.2,300 941,292.1 918.9,281 900,273.2 870,269.9 858.3,270.8 847.4,273.5 834.8,277.1 822.2,285.3 809.5,293.4 798.7,303.5 786.1,312.4 777.1,321.8 772.5,329 768,336 757.2,357.4 751.8,375.5 751.3,388 751.3,406.1 754,420.5 759.4,435 765.8,451.2 773.9,462 782.9,472.9 791.9,481 805.8,489.5 828.7,503.2 851.6,510.1 863.1,514.7 886,522.7 902,529.1 920.4,529.6 943.3,529.1 954.7,523.8 961.6,504.4 961.6,474.6 963.1,459.3 966.2,427.7 967.8,402.5 972.6,389.9 972.6,320.5 969.4,311 966.2,306.3"/>
<polyline points="860.8,455.8 849.7,460.2 835.6,471.1 821.9,475.7 808.1,481.5 794.4,490.6 787.5,492.2 765.7,492.5"/>
<polyline points="764,497.5 746.6,497.5"/>
<!-- e -->
<polyline points="685.3,510.5 701.5,510 706,505.5 707.3,497.7 704.2,493.2 697.9,492.3 683.5,492.5 679.8,495 678.3,501.3 678.3,520.3 680.7,522.6 706,522.6"/>
<!-- r1 -->
<polyline points="728.3,520.3 728.3,499.5"/>
<polyline points="714.1,492.5 721.3,492.7 728.2,499.5 736.7,498.8"/>
<!-- r2 -->
<polyline points="745.3,520 745.3,493"/>
<polyline points="740,493 745.3,493"/>
</g>

</svg>

</body></html>
